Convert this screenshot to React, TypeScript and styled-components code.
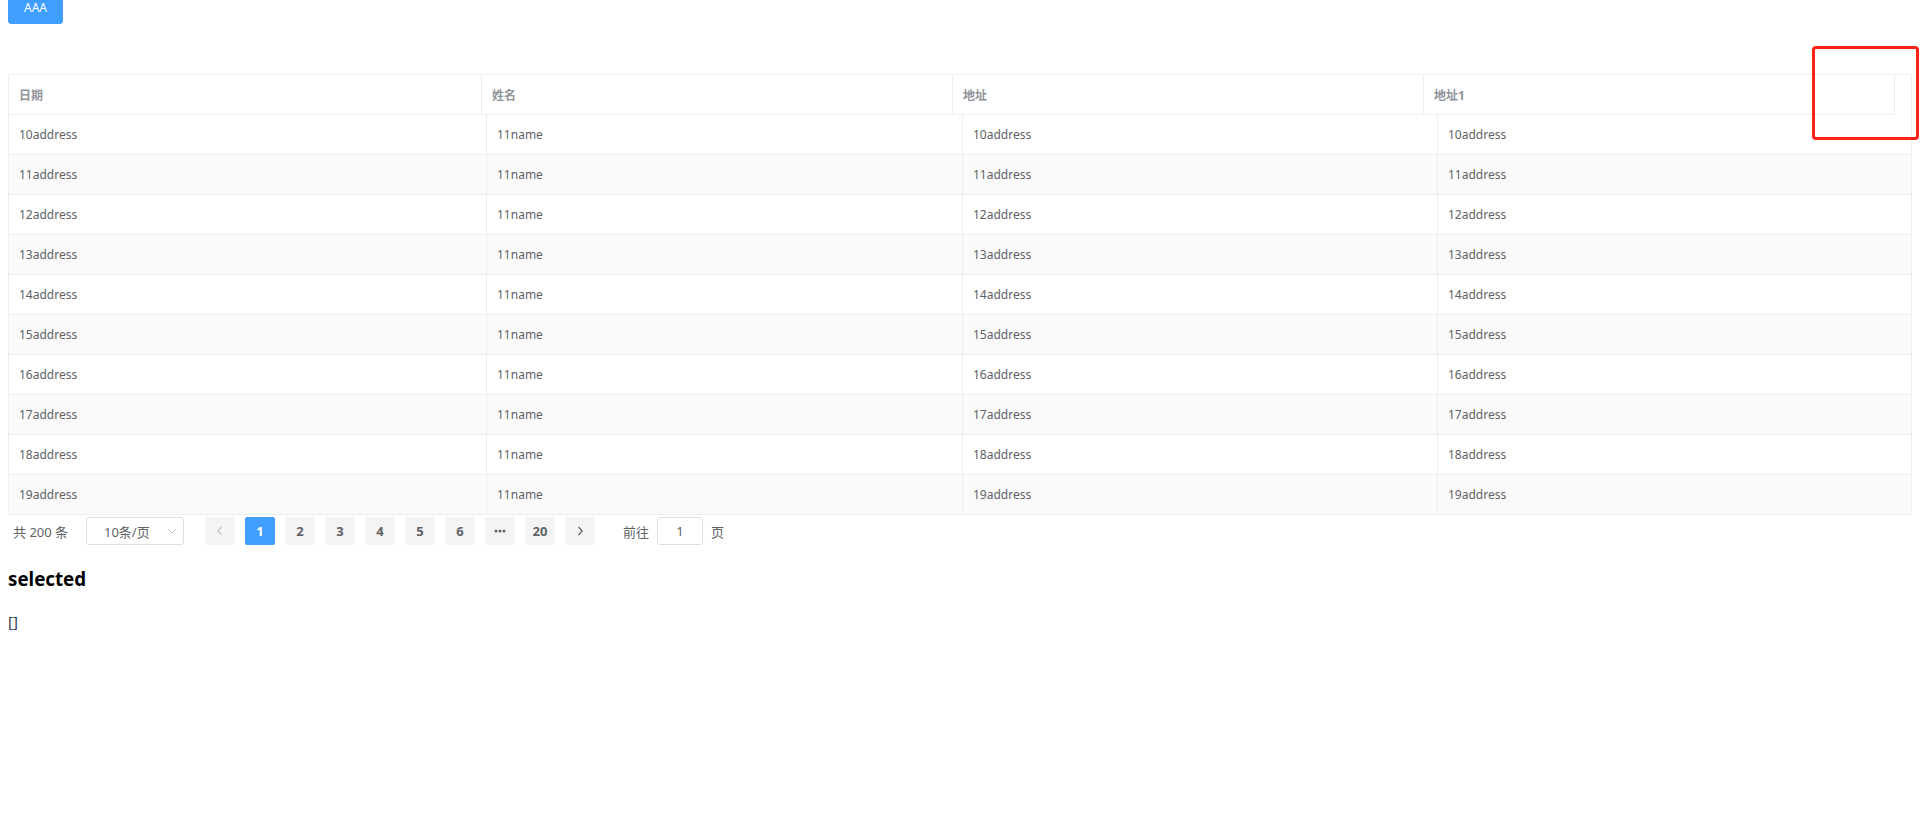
import React from "react";
import styled, { createGlobalStyle } from "styled-components";

const GlobalStyle = createGlobalStyle`
  html, body {
    margin: 0;
    background: #fff;
  }
  body {
    padding: 0 8px;
    font-family: "Noto Sans", "Noto Sans CJK SC", sans-serif;
  }
`;

const headCols = ["日期", "姓名", "地址", "地址1"];
const rows = Array.from({ length: 10 }, (_, i) => ({
  date: `${10 + i}address`,
  name: "11name",
  address: `${10 + i}address`,
  address1: `${10 + i}address`,
}));
const pages = ["1", "2", "3", "4", "5", "6", "more", "20"];

const ChevronLeft = ({ color }: { color: string }) => (
  <svg width="12" height="12" viewBox="0 0 12 12">
    <path d="M7.5 2 L3.8 6 L7.5 10" fill="none" stroke={color} strokeWidth="1.2" />
  </svg>
);

const ChevronRight = ({ color }: { color: string }) => (
  <svg width="12" height="12" viewBox="0 0 12 12">
    <path d="M4.5 2 L8.2 6 L4.5 10" fill="none" stroke={color} strokeWidth="1.2" />
  </svg>
);

const ChevronDown = () => (
  <svg width="10" height="6" viewBox="0 0 10 6">
    <path d="M1 1 L5 5 L9 1" fill="none" stroke="#c0c4cc" strokeWidth="1" />
  </svg>
);

const MoreDots = () => (
  <svg width="12" height="4" viewBox="0 0 12 4">
    <circle cx="2" cy="2" r="1.5" fill="#606266" />
    <circle cx="6" cy="2" r="1.5" fill="#606266" />
    <circle cx="10" cy="2" r="1.5" fill="#606266" />
  </svg>
);

export default function App() {
  return (
    <>
      <GlobalStyle />
      <Page>
        <PrimaryButton>AAA</PrimaryButton>
        <TableWrap>
          <HeadRow>
            {headCols.map((c) => (
              <HeadCell key={c}>{c}</HeadCell>
            ))}
            <Gutter />
          </HeadRow>
          {rows.map((r, i) => (
            <BodyRow key={r.date} $striped={i % 2 === 1}>
              <BodyCell>{r.date}</BodyCell>
              <BodyCell>{r.name}</BodyCell>
              <BodyCell>{r.address}</BodyCell>
              <BodyCell $last>{r.address1}</BodyCell>
            </BodyRow>
          ))}
        </TableWrap>
        <Pagination>
          <Total>共 200 条</Total>
          <SizeSelect>
            <span>10条/页</span>
            <ChevronDown />
          </SizeSelect>
          <PagerButton>
            <ChevronLeft color="#c0c4cc" />
          </PagerButton>
          {pages.map((p) => (
            <PagerButton key={p} $active={p === "1"}>
              {p === "more" ? <MoreDots /> : p}
            </PagerButton>
          ))}
          <PagerButton>
            <ChevronRight color="#606266" />
          </PagerButton>
          <Jumper>
            前往
            <JumpInput>1</JumpInput>
            页
          </Jumper>
        </Pagination>
        <SelectedTitle>selected</SelectedTitle>
        <SelectedValue>[]</SelectedValue>
      </Page>
      <Highlight />
    </>
  );
}

const Page = styled.div`
  margin-top: -8px;
`;

const PrimaryButton = styled.button`
  display: block;
  height: 32px;
  padding: 0 15px;
  font-family: inherit;
  font-size: 12px;
  line-height: 1;
  color: #fff;
  background: #409eff;
  border: 1px solid #409eff;
  border-radius: 3px;
  cursor: pointer;
`;

const TableWrap = styled.div`
  margin-top: 50px;
  border: 1px solid #ebeef5;
  border-bottom: none;
  font-size: 12px;
`;

const HeadRow = styled.div`
  display: grid;
  grid-template-columns: 473px 471px 471px 471px 1fr;
`;

const HeadCell = styled.div`
  box-sizing: border-box;
  height: 40px;
  padding: 0 10px;
  display: flex;
  align-items: center;
  color: #909399;
  font-weight: 700;
  border-right: 1px solid #ebeef5;
  border-bottom: 1px solid #ebeef5;
`;

const Gutter = styled.div`
  height: 40px;
`;

const BodyRow = styled.div<{ $striped?: boolean }>`
  display: grid;
  grid-template-columns: 478px 476px 475px 1fr;
  background: ${(p) => (p.$striped ? "#fafafa" : "#fff")};
`;

const BodyCell = styled.div<{ $last?: boolean }>`
  box-sizing: border-box;
  height: 40px;
  padding: 0 10px;
  display: flex;
  align-items: center;
  color: #606266;
  border-bottom: 1px solid #ebeef5;
  border-right: ${(p) => (p.$last ? "none" : "1px solid #ebeef5")};
`;

const Pagination = styled.div`
  box-sizing: border-box;
  height: 32px;
  padding: 2px 5px;
  display: flex;
  align-items: center;
  font-size: 13px;
  font-weight: 700;
  color: #303133;
`;

const Total = styled.span`
  width: 73px;
  font-weight: 400;
  color: #606266;
`;

const SizeSelect = styled.div`
  box-sizing: border-box;
  width: 98px;
  height: 28px;
  margin-right: 16px;
  padding: 0 6px 0 17px;
  display: flex;
  align-items: center;
  justify-content: space-between;
  font-weight: 400;
  color: #606266;
  border: 1px solid #dcdfe6;
  border-radius: 3px;
`;

const PagerButton = styled.div<{ $active?: boolean }>`
  width: 30px;
  height: 28px;
  margin: 0 5px;
  display: flex;
  align-items: center;
  justify-content: center;
  border-radius: 2px;
  background: ${(p) => (p.$active ? "#409eff" : "#f4f4f5")};
  color: ${(p) => (p.$active ? "#fff" : "#606266")};
`;

const Jumper = styled.div`
  margin-left: 23px;
  display: flex;
  align-items: center;
  font-weight: 400;
  color: #606266;
`;

const JumpInput = styled.div`
  box-sizing: border-box;
  width: 46px;
  height: 28px;
  margin: 0 8px;
  display: flex;
  align-items: center;
  justify-content: center;
  border: 1px solid #dcdfe6;
  border-radius: 3px;
`;

const SelectedTitle = styled.h3`
  margin: 20px 0 0;
  font-size: 18.72px;
  line-height: 24px;
  font-weight: 700;
  color: #000;
`;

const SelectedValue = styled.div`
  margin-top: 20px;
  font-size: 15px;
  line-height: 20px;
  color: #2c3e50;
`;

const Highlight = styled.div`
  position: absolute;
  top: 46px;
  left: 1812px;
  box-sizing: border-box;
  width: 107px;
  height: 94px;
  border: 3px solid #ff2216;
  border-radius: 4px;
  pointer-events: none;
`;
